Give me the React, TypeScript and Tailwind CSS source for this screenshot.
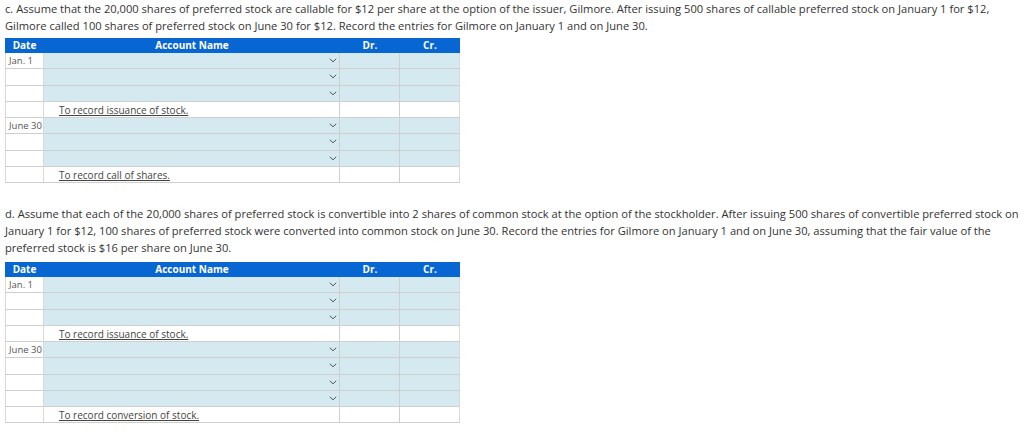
import React from "react";

type Row = { date?: string; memo?: string };

const Chevron = () => (
  <svg width="8" height="5" viewBox="0 0 8 5" className="mr-[2px]">
    <path d="M0.8 0.8 L4 3.8 L7.2 0.8" fill="none" stroke="#555" strokeWidth="1" />
  </svg>
);

const JournalTable = ({ rows }: { rows: Row[] }) => (
  <div className="ml-[5px] w-[455px] text-[10px]">
    <div className="flex h-[15px] items-center bg-[#0766d2] font-bold text-white">
      <div className="w-[39px] text-center">Date</div>
      <div className="w-[296px] text-center">Account Name</div>
      <div className="w-[60px] text-center">Dr.</div>
      <div className="w-[60px] text-center">Cr.</div>
    </div>
    {rows.map((r, i) => {
      const memo = r.memo !== undefined;
      const cell = memo ? "bg-white" : "bg-[#d5e9f0]";
      return (
        <div key={i} className="flex h-[16.25px] border-b border-[#cfcfcf]">
          <div className="w-[39px] whitespace-nowrap border-l border-r border-[#d9d9d9] bg-white pl-[3px] text-[9.5px] leading-[16px] text-[#555]">
            {r.date}
          </div>
          <div className={`flex w-[296px] items-center justify-end border-r border-[#cfcfcf] ${cell}`}>
            {memo ? (
              <span className="mr-auto pt-[2px] pl-[15px] text-[#444] underline">{r.memo}</span>
            ) : (
              <Chevron />
            )}
          </div>
          <div className={`w-[60px] border-r border-[#cfcfcf] ${cell}`} />
          <div className={`w-[60px] border-r border-[#d9d9d9] ${cell}`} />
        </div>
      );
    })}
  </div>
);

export default function App() {
  const tableC: Row[] = [
    { date: "Jan. 1" },
    {},
    {},
    { memo: "To record issuance of stock." },
    { date: "June 30" },
    {},
    {},
    { memo: "To record call of shares." },
  ];
  const tableD: Row[] = [
    { date: "Jan. 1" },
    {},
    {},
    { memo: "To record issuance of stock." },
    { date: "June 30" },
    {},
    {},
    {},
    { memo: "To record conversion of stock." },
  ];

  return (
    <div className="h-[434px] w-[1024px] bg-white font-['Open_Sans',sans-serif] text-[#333]">
      <p className="px-[5px] text-[11.15px] leading-[17px]">
        c. Assume that the 20,000 shares of preferred stock are callable for $12 per share at the option of the
        issuer, Gilmore. After issuing 500 shares of callable preferred stock on January 1 for $12, Gilmore called
        100 shares of preferred stock on June 30 for $12. Record the entries for Gilmore on January 1 and on June 30.
      </p>
      <div className="mt-[4px]">
        <JournalTable rows={tableC} />
      </div>
      <p className="mt-[22px] pr-[2px] pl-[5px] text-[11.15px] leading-[17px]">
        d. Assume that each of the 20,000 shares of preferred stock is convertible into 2 shares of common stock at
        the option of the stockholder. After issuing 500 shares of convertible preferred stock on January 1 for $12,
        100 shares of preferred stock were converted into common stock on June 30. Record the entries for Gilmore on
        January 1 and on June 30, assuming that the fair value of the preferred stock is $16 per share on June 30.
      </p>
      <div className="mt-[6px]">
        <JournalTable rows={tableD} />
      </div>
    </div>
  );
}
